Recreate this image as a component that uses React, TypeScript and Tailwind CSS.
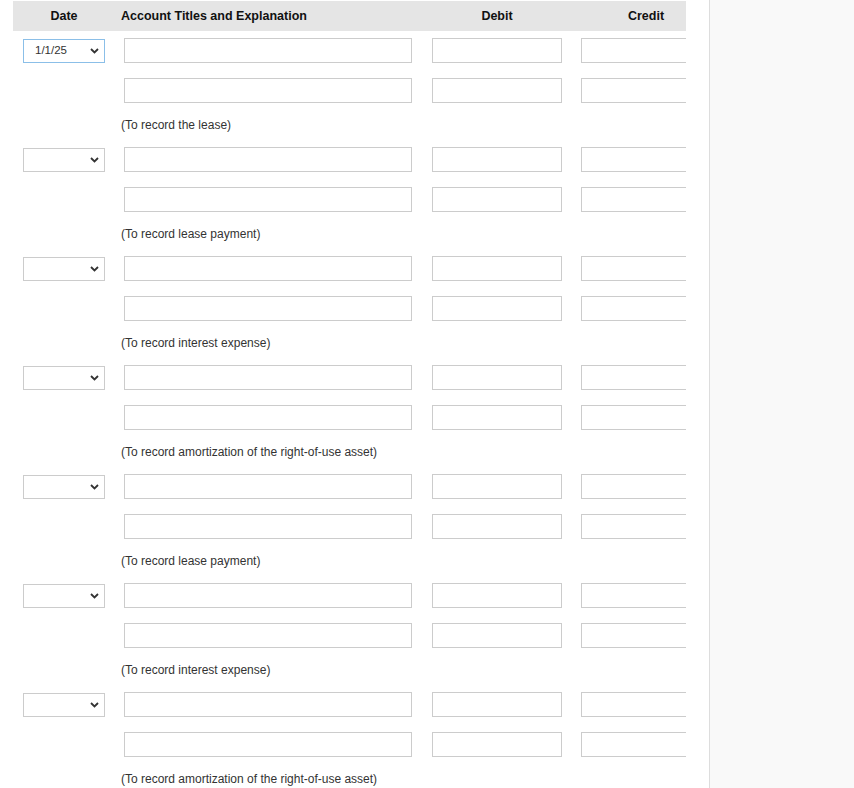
import { Fragment } from "react"

const entries = [
  { date: "1/1/25", note: "(To record the lease)" },
  { date: "", note: "(To record lease payment)" },
  { date: "", note: "(To record interest expense)" },
  { date: "", note: "(To record amortization of the right-of-use asset)" },
  { date: "", note: "(To record lease payment)" },
  { date: "", note: "(To record interest expense)" },
  { date: "", note: "(To record amortization of the right-of-use asset)" },
]

function Chevron() {
  return (
    <svg width="9" height="6" viewBox="0 0 9 6" className="shrink-0">
      <polyline points="1,1 4.5,4.5 8,1" fill="none" stroke="#333" strokeWidth="1.8" />
    </svg>
  )
}

function DateSelect({ value, active }: { value: string; active?: boolean }) {
  return (
    <div
      className={
        "w-[82px] h-[24px] shrink-0 flex items-center justify-between pl-[11px] pr-[5px] bg-white border " +
        (active ? "border-[#8bbfe8]" : "border-[#cccccc]")
      }
    >
      <span className="text-[11.5px] text-[#333]">{value}</span>
      <Chevron />
    </div>
  )
}

function Field({ w }: { w: string }) {
  return <div className={`${w} h-[25px] shrink-0 bg-white border border-[#cccccc]`} />
}

function Line({ date, active }: { date?: string; active?: boolean }) {
  return (
    <div className="flex items-center h-[25px] pl-[10px]">
      {date !== undefined ? <DateSelect value={date} active={active} /> : <div className="w-[82px] shrink-0" />}
      <div className="ml-[19px]">
        <Field w="w-[288px]" />
      </div>
      <div className="ml-[20px]">
        <Field w="w-[130px]" />
      </div>
      <div className="ml-[19px]">
        <Field w="w-[130px]" />
      </div>
    </div>
  )
}

export default function App() {
  return (
    <div
      className="flex w-[854px] h-[788px] bg-white overflow-hidden"
      style={{ fontFamily: '"Liberation Sans", Arial, sans-serif' }}
    >
      <div className="w-[709px] shrink-0 pl-[13px] pr-[23px] pt-[1px]">
        <div className="w-[673px] overflow-hidden">
          {/* header */}
          <div className="flex items-center h-[30px] bg-[#e5e5e5] pl-[10px] text-[12.5px] font-bold text-[#111] whitespace-nowrap">
            <div className="w-[82px] shrink-0 text-center">Date</div>
            <div className="ml-[16px] w-[291px] shrink-0">Account Titles and Explanation</div>
            <div className="ml-[20px] w-[130px] shrink-0 text-center">Debit</div>
            <div className="ml-[19px] w-[130px] shrink-0 text-center">Credit</div>
          </div>

          {entries.map((e, i) => (
            <Fragment key={i}>
              <div className="flex flex-col pt-[7px] pb-[7px] w-[760px]">
                <Line date={e.date} active={i === 0} />
                <div className="mt-[15px]">
                  <Line />
                </div>
                <div className="mt-[14px] h-[16px] leading-4 pl-[108px] text-[12px] text-[#333] whitespace-nowrap">
                  {e.note}
                </div>
              </div>
            </Fragment>
          ))}
        </div>
      </div>
      <div className="flex-1 border-l border-[#dddddd] bg-[#f9f9f9]" />
    </div>
  )
}
